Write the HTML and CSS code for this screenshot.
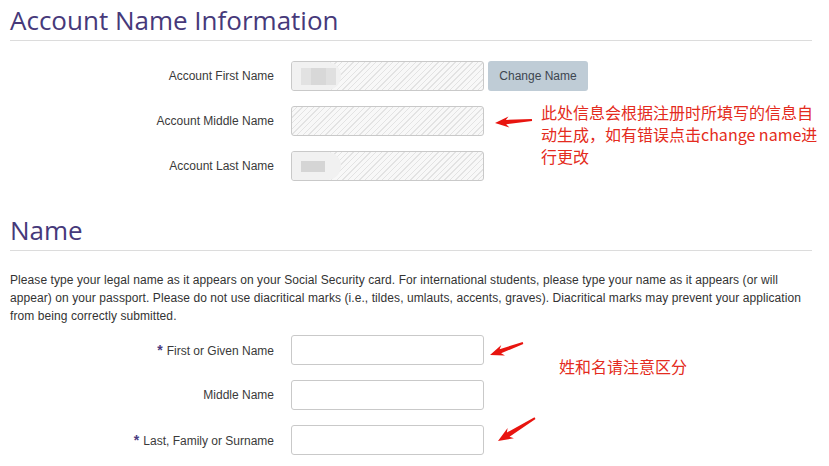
FILE: index.html
```html
<!DOCTYPE html>
<html lang="en">
<head>
<meta charset="utf-8">
<title>Account Name Information</title>
<link rel="stylesheet" href="styles.css">
</head>
<body>
<div class="page">
  <section class="section">
    <h2 class="section-title">Account Name Information</h2>
    <div class="rows rows-account">
      <div class="row">
        <label class="label">Account First Name</label>
        <div class="field readonly"><span class="blur"><i class="blur-fill wide"></i></span></div>
        <button class="btn" type="button">Change Name</button>
      </div>
      <div class="row">
        <label class="label">Account Middle Name</label>
        <div class="field readonly"></div>
      </div>
      <div class="row">
        <label class="label">Account Last Name</label>
        <div class="field readonly"><span class="blur"><i class="blur-fill narrow"></i></span></div>
      </div>
    </div>
  </section>

  <section class="section section-name">
    <h2 class="section-title">Name</h2>
    <p class="intro">Please type your legal name as it appears on your Social Security card. For international students, please type your name as it appears (or will appear) on your passport. Please do not use diacritical marks (i.e., tildes, umlauts, accents, graves). Diacritical marks may prevent your application from being correctly submitted.</p>
    <div class="rows rows-name">
      <div class="row">
        <label class="label"><span class="req">*</span>First or Given Name</label>
        <div class="field"></div>
      </div>
      <div class="row">
        <label class="label">Middle Name</label>
        <div class="field"></div>
      </div>
      <div class="row">
        <label class="label"><span class="req">*</span>Last, Family or Surname</label>
        <div class="field"></div>
      </div>
    </div>
  </section>

  <div class="annotations">
    <svg class="arrows" width="829" height="466" viewBox="0 0 829 466" xmlns="http://www.w3.org/2000/svg">
      <polygon points="531.9,119 505.8,119.9 508.5,116.4 495,123 509.4,127.4 506.2,124.3 532.1,121"/>
      <polygon points="522.7,342.1 499.6,349.2 501.3,345.0 490,355 505.0,355.4 501.1,353.3 523.3,343.9"/>
      <polygon points="534.5,417.2 506.9,432.6 507.6,428.0 498,441 513.9,438.2 509.5,436.7 535.5,418.9"/>
    </svg>
    <p class="note note-account"><span class="note-line">此处信息会根据注册时所填写的信息自</span><span class="note-line">动生成，如有错误点击change name进</span><span class="note-line">行更改</span></p>
    <p class="note note-name">姓和名请注意区分</p>
  </div>
</div>
</body>
</html>
```

FILE: styles.css
```css
html, body {
  margin: 0;
  padding: 0;
  background: #ffffff;
}

body {
  font-family: "Liberation Sans", Arial, sans-serif;
  font-size: 12px;
  color: #333333;
}

.page {
  position: relative;
  width: 829px;
  height: 466px;
  box-sizing: border-box;
  padding: 4px 17px 0 10px;
  overflow: hidden;
}

.section-title {
  margin: 0;
  padding: 0 0 4px 0;
  font-family: "Open Sans", "Noto Sans", sans-serif;
  font-weight: 400;
  font-size: 26px;
  line-height: 32px;
  color: #46397a;
  border-bottom: 1px solid #dcdcdc;
}

.rows {
  display: flex;
  flex-direction: column;
  gap: 15px;
}

.rows-account {
  margin-top: 20px;
}

.section-name {
  margin-top: 33px;
}

.intro {
  margin: 20px 0 0 0;
  line-height: 18px;
  letter-spacing: 0.08px;
  color: #333333;
}

.rows-name {
  margin-top: 10px;
}

.row {
  display: flex;
  align-items: center;
  height: 30px;
}

.label {
  width: 264px;
  flex: none;
  text-align: right;
  color: #3a3a3a;
  margin-right: 17px;
}

.req {
  color: #4a3c80;
  font-weight: bold;
  font-size: 14px;
  margin-right: 4px;
}

.field {
  width: 193px;
  height: 30px;
  box-sizing: border-box;
  border: 1px solid #c9c9c9;
  border-radius: 3px;
  background: #ffffff;
  flex: none;
  display: flex;
  align-items: center;
  overflow: hidden;
}

.readonly {
  background-color: #f8f8f8;
  background-image: repeating-linear-gradient(135deg, #f8f8f8 0px, #f8f8f8 3px, #e3e3e3 3px, #e3e3e3 4px);
}

.blur {
  display: flex;
  align-items: center;
  width: 40px;
  height: 28px;
  padding-left: 9px;
  background: #f1f1f1;
  border-radius: 0 14px 14px 0;
}

.blur-fill {
  display: block;
  background: #dadada;
}

.blur-fill.wide {
  width: 35px;
  height: 17px;
  background: linear-gradient(90deg, #e2e2e2 0, #e2e2e2 10px, #d8d8d8 10px, #d8d8d8 25px, #e0e0e0 25px);
}

.blur-fill.narrow {
  width: 24px;
  height: 11px;
  background: #d5d5d5;
}

.btn {
  margin-left: 4px;
  width: 100px;
  height: 30px;
  border: none;
  border-radius: 3px;
  background: #bfccd6;
  color: #3d4650;
  font-family: "Liberation Sans", Arial, sans-serif;
  font-size: 12px;
  padding: 0;
}

.annotations {
  position: absolute;
  left: 0;
  top: 0;
  width: 829px;
  height: 466px;
  pointer-events: none;
}

.arrows {
  position: absolute;
  left: 0;
  top: 0;
}

.arrows polygon {
  fill: #e8140f;
}

.note {
  position: absolute;
  margin: 0;
  font-family: "Noto Sans CJK SC", "Noto Sans", sans-serif;
  font-size: 16px;
  line-height: 22px;
  color: #e42b20;
  white-space: nowrap;
}

.note-line {
  display: block;
  height: 22px;
}

.note-account {
  left: 541px;
  top: 101px;
}

.note-name {
  left: 559px;
  top: 355px;
}
```
